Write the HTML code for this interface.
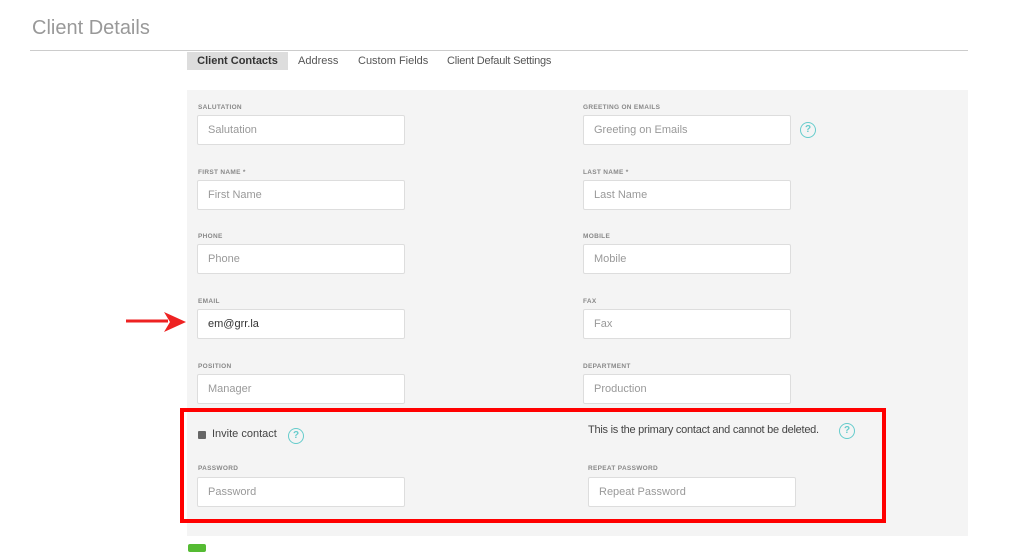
<!DOCTYPE html><html><head><style>
body{margin:0;width:1024px;height:548px;background:#fff;font-family:"Liberation Sans",sans-serif;position:relative;overflow:hidden}
.a{position:absolute}
.t{font-size:20px;color:#999;left:32px;top:17px}
.hr{left:30px;top:50px;width:938px;height:1px;background:#ccc}
.tab{top:52px;height:18px;font-size:11px;color:#555;line-height:18px}
.panel{left:187px;top:90px;width:781px;height:446px;background:#f4f4f4}
.lb{font-size:6.5px;font-weight:bold;color:#888;letter-spacing:.3px}
.in{background:#fff;border:1px solid #ddd;border-radius:2px;font-size:11px;color:#999;line-height:28px;padding-left:10px;box-sizing:border-box;width:208px;height:30px}
.q{width:14px;height:14px;border:1.5px solid #6cc;border-radius:50%;color:#6cc;font-size:10px;font-weight:bold;text-align:center;line-height:14px}
</style></head><body>
<div class="a t">Client Details</div>
<div class="a hr"></div>
<div class="a tab" style="left:187px;width:101px;background:#ddd;font-weight:bold;color:#333;text-align:center">Client Contacts</div>
<div class="a tab" style="left:298px">Address</div>
<div class="a tab" style="left:358px">Custom Fields</div>
<div class="a tab" style="left:447px;letter-spacing:-.2px">Client Default Settings</div>
<div class="a panel"></div>

<div class="a lb" style="left:198px;top:104px">SALUTATION</div><div class="a in" style="left:197px;top:115px">Salutation</div>
<div class="a lb" style="left:583px;top:104px">GREETING ON EMAILS</div><div class="a in" style="left:583px;top:115px">Greeting on Emails</div>
<div class="a q" style="left:800px;top:122px">?</div>
<div class="a lb" style="left:198px;top:169px">FIRST NAME *</div><div class="a in" style="left:197px;top:180px">First Name</div>
<div class="a lb" style="left:583px;top:169px">LAST NAME *</div><div class="a in" style="left:583px;top:180px">Last Name</div>
<div class="a lb" style="left:198px;top:233px">PHONE</div><div class="a in" style="left:197px;top:244px">Phone</div>
<div class="a lb" style="left:583px;top:233px">MOBILE</div><div class="a in" style="left:583px;top:244px">Mobile</div>
<div class="a lb" style="left:198px;top:298px">EMAIL</div><div class="a in" style="left:197px;top:309px;color:#333">em@grr.la</div>
<div class="a lb" style="left:583px;top:298px">FAX</div><div class="a in" style="left:583px;top:309px">Fax</div>
<div class="a lb" style="left:198px;top:363px">POSITION</div><div class="a in" style="left:197px;top:374px">Manager</div>
<div class="a lb" style="left:583px;top:363px">DEPARTMENT</div><div class="a in" style="left:583px;top:374px">Production</div>

<div class="a" style="left:198px;top:431px;width:8px;height:8px;background:#666;border-radius:1px"></div>
<div class="a" style="left:212px;top:428px;font-size:11px;color:#444">Invite contact</div>
<div class="a q" style="left:288px;top:428px">?</div>
<div class="a" style="left:588px;top:424px;font-size:11px;color:#444;letter-spacing:-.25px">This is the primary contact and cannot be deleted.</div>
<div class="a q" style="left:839px;top:423px">?</div>
<div class="a lb" style="left:198px;top:465px">PASSWORD</div><div class="a in" style="left:197px;top:477px">Password</div>
<div class="a lb" style="left:588px;top:465px">REPEAT PASSWORD</div><div class="a in" style="left:588px;top:477px">Repeat Password</div>
<div class="a" style="left:180px;top:408px;width:698px;height:107px;border:4px solid #f00"></div>
<div class="a" style="left:188px;top:544px;width:18px;height:8px;background:#5b3;border-radius:2px"></div>
<svg class="a" style="left:124px;top:310px" width="64" height="24"><line x1="2" y1="11" x2="44" y2="11" stroke="#e22" stroke-width="3"/><polygon points="40,2 62,12 40,22 46,12" fill="#e22"/></svg>
</body></html>
